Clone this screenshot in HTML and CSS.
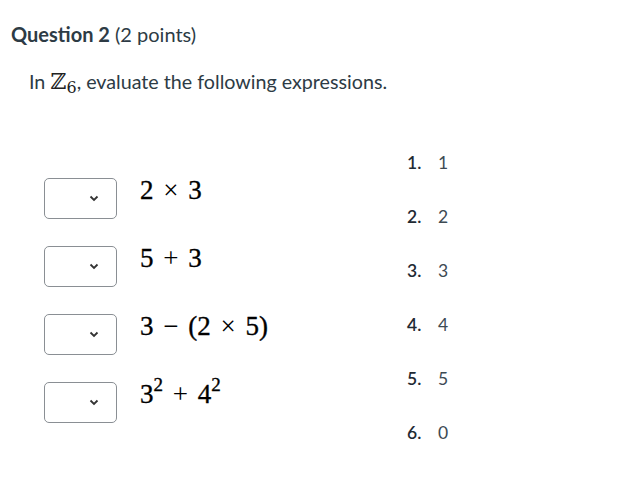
FILE: index.html
```html
<!DOCTYPE html>
<html>
<head>
<meta charset="utf-8">
<link rel="stylesheet" href="styles.css">
</head>
<body>
<div class="question">
  <h2 class="title"><b>Question 2</b> (2 points)</h2>
  <p class="prompt">In <span class="zz">ℤ<sub>6</sub></span>, evaluate the following expressions.</p>
  <div class="match">
    <div class="rows">
      <div class="row">
        <div class="select"><svg width="10" height="7" viewBox="0 0 10 7"><path d="M1.5 1.5 L5 5 L8.5 1.5" fill="none" stroke="#333" stroke-width="1.8"/></svg></div>
        <div class="math">2 <span class="op">×</span> 3</div>
      </div>
      <div class="row">
        <div class="select"><svg width="10" height="7" viewBox="0 0 10 7"><path d="M1.5 1.5 L5 5 L8.5 1.5" fill="none" stroke="#333" stroke-width="1.8"/></svg></div>
        <div class="math">5 <span class="op">+</span> 3</div>
      </div>
      <div class="row">
        <div class="select"><svg width="10" height="7" viewBox="0 0 10 7"><path d="M1.5 1.5 L5 5 L8.5 1.5" fill="none" stroke="#333" stroke-width="1.8"/></svg></div>
        <div class="math">3 <span class="op">−</span> (2 <span class="op">×</span> 5)</div>
      </div>
      <div class="row">
        <div class="select"><svg width="10" height="7" viewBox="0 0 10 7"><path d="M1.5 1.5 L5 5 L8.5 1.5" fill="none" stroke="#333" stroke-width="1.8"/></svg></div>
        <div class="math">3<sup>2</sup> <span class="op">+</span> 4<sup>2</sup></div>
      </div>
    </div>
    <ol class="options">
      <li><span class="num">1.</span><span class="val">1</span></li>
      <li><span class="num">2.</span><span class="val">2</span></li>
      <li><span class="num">3.</span><span class="val">3</span></li>
      <li><span class="num">4.</span><span class="val">4</span></li>
      <li><span class="num">5.</span><span class="val">5</span></li>
      <li><span class="num">6.</span><span class="val">0</span></li>
    </ol>
  </div>
</div>
</body>
</html>
```
FILE: styles.css
```css
html, body {
  margin: 0;
  padding: 0;
  background: #ffffff;
}
body {
  font-family: Lato, "Liberation Sans", sans-serif;
  color: #2d3b45;
}
.question {
  padding: 22px 0 0 11px;
}
.title {
  margin: 0;
  font-size: 20px;
  line-height: 24px;
  font-weight: normal;
  color: #2d3b45;
}
.title b {
  font-weight: bold;
}
.prompt {
  margin: 24px 0 0 18px;
  font-size: 19.7px;
  line-height: 24px;
  color: #2d3b45;
}
.zz {
  font-family: "DejaVu Serif", "Liberation Serif", serif;
  font-size: 22px;
  color: #222;
}
.zz sub {
  font-size: 16px;
  vertical-align: -4px;
  line-height: 0;
}
.match {
  display: flex;
  margin-top: 41px;
}
.rows {
  display: flex;
  flex-direction: column;
  gap: 28px;
  padding: 43px 0 0 33px;
  width: 363px;
}
.row {
  display: flex;
  align-items: center;
  gap: 23px;
  height: 40px;
}
.select {
  box-sizing: border-box;
  width: 73px;
  height: 41px;
  border: 1px solid #8a8f94;
  border-radius: 5px;
  display: flex;
  align-items: center;
  justify-content: flex-end;
  padding-right: 17px;
}
.select svg {
  display: block;
  margin-top: 1px;
}
.math {
  font-family: "Liberation Serif", "DejaVu Serif", serif;
  font-size: 27px;
  color: #000;
  margin-bottom: 16px;
  white-space: nowrap;
  word-spacing: 1px;
  -webkit-text-stroke: 0.35px #000;
}
.math .op {
  padding: 0 2px;
  -webkit-text-stroke: 0;
}
.math sup {
  font-size: 19px;
  vertical-align: 12px;
  line-height: 0;
}
.options {
  list-style: none;
  margin: 0;
  padding: 16px 0 0 0;
  display: flex;
  flex-direction: column;
  gap: 30px;
}
.options li {
  font-size: 17.5px;
  line-height: 24px;
  display: flex;
}
.options .num {
  width: 31px;
  color: #1f2a33;
  font-weight: 600;
}
.options .val {
  color: #3d4a53;
}
```
